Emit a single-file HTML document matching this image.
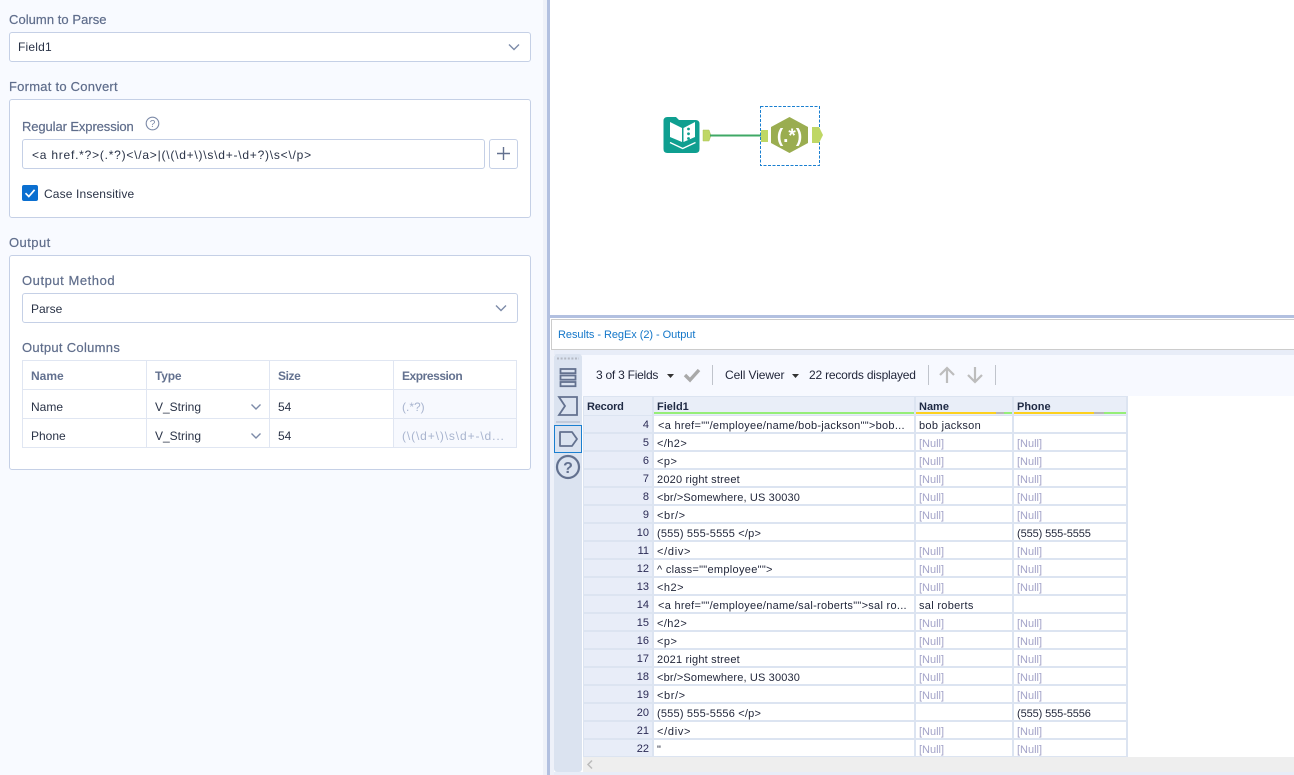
<!DOCTYPE html>
<html><head><meta charset="utf-8">
<style>
html,body{margin:0;padding:0}
body{width:1294px;height:775px;position:relative;overflow:hidden;background:#fff;font-family:"Liberation Sans",sans-serif;font-size:12px;color:#28334a}
.a{position:absolute;white-space:nowrap}
.lb{color:#5f6d8b;font-size:13px;line-height:16px;-webkit-text-stroke:.2px #5f6d8b}
.box{position:absolute;background:#fff;border:1px solid #c5d0e6;border-radius:3px;box-sizing:border-box}
.tx{position:absolute;white-space:nowrap;font-size:12px;line-height:16px;color:#2a3347}
.th{position:absolute;font-weight:bold;color:#63718f;font-size:12px;line-height:16px}
.ln{position:absolute;background:#e0e6f2}
.row{position:absolute;left:584px;width:543px;height:16px;line-height:20px;font-size:11px;color:#1f2438}
.row span{position:absolute;top:0;height:16px;background:#fff;white-space:nowrap;overflow:hidden;box-sizing:border-box;padding-left:3px}
.row .r{left:0;width:68px;background:#e8edf8;text-align:right;padding:0 3px 0 0;color:#2b2b55;line-height:18px}
.row .f{left:70px;width:260px}
.row .n{left:332px;width:96px}
.row .p{left:430px;width:112px}
.nl{color:#a3a3c8}
.hd{position:absolute;top:397px;height:18px;background:#e9eef8;font-weight:bold;font-size:11px;line-height:20px;color:#1f2a44;padding-left:3px;box-sizing:border-box}
.bar{position:absolute;top:412px;height:2px}
</style></head><body>

<div class="a" style="left:0;top:0;width:543px;height:775px;background:#f8faff"></div>
<div class="a" style="left:543px;top:0;width:4px;height:775px;background:#eef1f9"></div>
<div class="a" style="left:547px;top:0;width:3px;height:775px;background:#b2c0e0"></div>
<div class="a" style="left:550px;top:315px;width:744px;height:3px;background:#b2c0e0"></div>

<div class="a lb" style="left:9px;top:12px;letter-spacing:.05px">Column to Parse</div>
<div class="box" style="left:9px;top:32px;width:522px;height:30px"></div>
<div class="tx" style="left:18px;top:39px;letter-spacing:.2px">Field1</div>
<svg class="a" style="left:508px;top:43px" width="12" height="8"><path d="M1 1.500 6 6.500 11 1.500" fill="none" stroke="#7c8aa8" stroke-width="1.400"/></svg>

<div class="a lb" style="left:9px;top:79px;letter-spacing:.24px">Format to Convert</div>
<div class="box" style="left:9px;top:99px;width:522px;height:119px"></div>
<div class="a lb" style="left:22px;top:119px;letter-spacing:-.1px">Regular Expression</div>
<svg class="a" style="left:145px;top:116px" width="15" height="15"><circle cx="7.500" cy="7.500" r="6.300" fill="none" stroke="#7c8aa8" stroke-width="1.100"/><text x="7.500" y="11" text-anchor="middle" font-size="10" font-family="Liberation Sans" fill="#7c8aa8">?</text></svg>
<div class="box" style="left:22px;top:139px;width:463px;height:30px"></div>
<div class="tx" style="left:32px;top:147px;letter-spacing:.77px">&lt;a href.*?&gt;(.*?)&lt;\/a&gt;|(\(\d+\)\s\d+-\d+?)\s&lt;\/p&gt;</div>
<div class="box" style="left:489px;top:139px;width:29px;height:30px"></div>
<svg class="a" style="left:496px;top:146px" width="15" height="15"><path d="M7.500 1v13M1 7.500h13" stroke="#63718f" stroke-width="1.400" fill="none"/></svg>
<div class="a" style="left:22px;top:185px;width:16px;height:16px;background:#0b6fd0;border-radius:2px"></div>
<svg class="a" style="left:22px;top:185px" width="16" height="16"><path d="M3.500 8.200 6.800 11.500 12.600 4.800" fill="none" stroke="#fff" stroke-width="1.700"/></svg>
<div class="tx" style="left:44px;top:186px;letter-spacing:.14px">Case Insensitive</div>

<div class="a lb" style="left:9px;top:235px;letter-spacing:.45px">Output</div>
<div class="box" style="left:9px;top:255px;width:522px;height:215px"></div>
<div class="a lb" style="left:22px;top:273px;letter-spacing:.55px">Output Method</div>
<div class="box" style="left:22px;top:293px;width:496px;height:30px"></div>
<div class="tx" style="left:31px;top:301px">Parse</div>
<svg class="a" style="left:495px;top:304px" width="12" height="8"><path d="M1 1.500 6 6.500 11 1.500" fill="none" stroke="#7c8aa8" stroke-width="1.400"/></svg>
<div class="a lb" style="left:22px;top:340px;letter-spacing:.3px">Output Columns</div>

<div class="a" style="left:394px;top:390px;width:123px;height:58px;background:#f7f9fe"></div>
<div class="ln" style="left:22px;top:360px;width:495px;height:1px"></div>
<div class="ln" style="left:22px;top:389px;width:495px;height:1px"></div>
<div class="ln" style="left:22px;top:418px;width:495px;height:1px"></div>
<div class="ln" style="left:22px;top:447px;width:495px;height:1px"></div>
<div class="ln" style="left:22px;top:360px;width:1px;height:88px"></div>
<div class="ln" style="left:146px;top:360px;width:1px;height:88px"></div>
<div class="ln" style="left:269px;top:360px;width:1px;height:88px"></div>
<div class="ln" style="left:393px;top:360px;width:1px;height:88px"></div>
<div class="ln" style="left:516px;top:360px;width:1px;height:88px"></div>
<div class="th" style="left:31px;top:368px">Name</div>
<div class="th" style="left:155px;top:368px;letter-spacing:-.2px">Type</div>
<div class="th" style="left:278px;top:368px;letter-spacing:-.4px">Size</div>
<div class="th" style="left:402px;top:368px;letter-spacing:-.45px">Expression</div>
<div class="tx" style="left:31px;top:399px">Name</div>
<div class="tx" style="left:155px;top:399px">V_String</div>
<svg class="a" style="left:250px;top:403px" width="12" height="8"><path d="M1.500 1.500 6 6 10.500 1.500" fill="none" stroke="#7c8aa8" stroke-width="1.400"/></svg>
<div class="tx" style="left:278px;top:399px">54</div>
<div class="tx" style="left:402px;top:399px;color:#a9b5cf">(.*?)</div>
<div class="tx" style="left:31px;top:428px">Phone</div>
<div class="tx" style="left:155px;top:428px">V_String</div>
<svg class="a" style="left:250px;top:432px" width="12" height="8"><path d="M1.500 1.500 6 6 10.500 1.500" fill="none" stroke="#7c8aa8" stroke-width="1.400"/></svg>
<div class="tx" style="left:278px;top:428px">54</div>
<div class="tx" style="left:402px;top:428px;color:#a9b5cf;letter-spacing:.88px">(\(\d+\)\s\d+-\d...</div>

<!-- canvas -->
<svg class="a" style="left:650px;top:95px" width="190" height="80">
<path d="M13.500 26 Q13.500 22 17.500 22 H26 L29 25 H45.500 Q49.500 25 49.500 29 V54 Q49.500 58 45.500 58 H17.500 Q13.500 58 13.500 54Z" fill="#0f9f90"/>
<path d="M20 27 L32 33 V47 L20 42Z" fill="#fff"/><path d="M45 27 L33.500 33 V47 L45 42Z" fill="#fff"/>
<circle cx="38.500" cy="34" r="1.400" fill="#0f9f90"/><circle cx="38.500" cy="38.800" r="1.400" fill="#0f9f90"/><circle cx="38.500" cy="43.500" r="1.400" fill="#0f9f90"/>
<path d="M20 47.500 L32.700 53.500 L45.500 47.500" fill="none" stroke="#fff" stroke-width="1.300"/>
<path d="M53 35 H59 L61 40.500 L59 46 H53Z" fill="#bfd765" stroke="#a9c056" stroke-width=".5"/>
<path d="M60 40.500 H113" stroke="#3fa866" stroke-width="2"/>
<rect x="110.500" y="11.500" width="59" height="59" fill="none" stroke="#1a7fd0" stroke-width="1" stroke-dasharray="3 1.500"/>
<rect x="111" y="35" width="7" height="12" fill="#bfd765"/>
<path d="M139.500 22 L158 32 V48 L139.500 58 L121 48 V32Z" fill="#9aad50"/>
<text x="139.500" y="47" text-anchor="middle" font-family="Liberation Sans" font-weight="bold" font-size="19" fill="#fff">(.*)</text>
<path d="M162 32 H169 L173 40 L169 48 H162Z" fill="#bfd765"/>
</svg>

<!-- results -->
<div class="a" style="left:551px;top:319px;width:743px;height:31px;background:#fff;border:1px solid #ccc;border-right:0;box-sizing:border-box;line-height:31px;font-size:11px;color:#1477c9;padding-left:6px;letter-spacing:-.05px">Results - RegEx (2) - Output</div>
<div class="a" style="left:550px;top:350px;width:744px;height:425px;background:#fff"></div>
<div class="a" style="left:550px;top:350px;width:744px;height:5px;background:#e8edf8"></div>
<div class="a" style="left:550px;top:772px;width:744px;height:3px;background:#e8edf8"></div>
<div class="a" style="left:550px;top:350px;width:4px;height:425px;background:#eef1f9"></div>
<div class="a" style="left:554px;top:354px;width:28px;height:418px;background:#dbe3f0;border-radius:3px"></div>
<div class="a" style="left:582px;top:355px;width:712px;height:41px;background:#f7f9ff"></div>
<div class="a" style="left:583px;top:757px;width:711px;height:15px;background:#eeeeee"></div>
<svg class="a" style="left:585px;top:758px" width="10" height="13"><path d="M7 2.500 3 6.500 7 10.500" fill="none" stroke="#bbb" stroke-width="1.500"/></svg>

<svg class="a" style="left:554px;top:354px" width="28" height="130">
<path d="M3 4.500h22" stroke="#b4b9c4" stroke-width="2" stroke-dasharray="2 1.600"/>
<g fill="none" stroke="#63718f" stroke-width="1.800"><rect x="6.500" y="15" width="15" height="4.200"/><rect x="6.500" y="21.500" width="15" height="4.200"/><rect x="6.500" y="28" width="15" height="4.200"/>
<path d="M5 43 H23 V61 H5 L11 52Z"/></g>
<path d="M2 68h24" stroke="#aab3c6" stroke-width="1"/>
<rect x=".5" y="71.500" width="27" height="27" fill="none" stroke="#1a7fd0"/>
<path d="M6 78 H18 L23 85 L18 92 H6Z" fill="none" stroke="#63718f" stroke-width="1.800" stroke-linejoin="round"/>
<circle cx="14" cy="113" r="11" fill="none" stroke="#63718f" stroke-width="2.200"/>
<text x="14" y="119" text-anchor="middle" font-family="Liberation Sans" font-weight="bold" font-size="16" fill="#63718f">?</text>
</svg>

<div class="a" style="left:596px;top:368px;font-size:12px;color:#1f2438;letter-spacing:-.25px">3 of 3 Fields</div>
<svg class="a" style="left:667px;top:374px" width="7" height="4"><path d="M0 0H7L3.500 4Z" fill="#333"/></svg>
<svg class="a" style="left:683px;top:367px" width="18" height="16"><path d="M2 8 7 13 16 3" fill="none" stroke="#a9a9a9" stroke-width="3.400"/></svg>
<div class="a" style="left:712px;top:365px;width:1px;height:20px;background:#c0c4cc"></div>
<div class="a" style="left:725px;top:368px;font-size:12px;color:#1f2438;letter-spacing:-.1px">Cell Viewer</div>
<svg class="a" style="left:792px;top:374px" width="7" height="4"><path d="M0 0H7L3.500 4Z" fill="#333"/></svg>
<div class="a" style="left:809px;top:368px;font-size:12px;color:#1f2438;letter-spacing:-.2px">22 records displayed</div>
<div class="a" style="left:928px;top:365px;width:1px;height:20px;background:#c0c4cc"></div>
<svg class="a" style="left:938px;top:366px" width="18" height="18"><path d="M9 17V2M2 9 9 2 16 9" fill="none" stroke="#bdbdbd" stroke-width="2.200"/></svg>
<svg class="a" style="left:966px;top:366px" width="18" height="18"><path d="M9 1V16M2 9 9 16 16 9" fill="none" stroke="#bdbdbd" stroke-width="2.200"/></svg>
<div class="a" style="left:995px;top:365px;width:1px;height:20px;background:#c0c4cc"></div>

<!-- grid -->
<div class="a" style="left:583px;top:396px;width:545px;height:361px;background:#dce4f1"></div>
<div class="hd" style="left:584px;width:68px;letter-spacing:-.2px">Record</div>
<div class="hd" style="left:654px;width:260px">Field1</div>
<div class="hd" style="left:916px;width:96px">Name</div>
<div class="hd" style="left:1014px;width:112px">Phone</div>
<div class="bar" style="left:654px;width:260px;background:#96ee78"></div>
<div class="bar" style="left:916px;width:80px;background:#fdd11f"></div>
<div class="bar" style="left:996px;width:8px;background:#b8b8b8"></div>
<div class="bar" style="left:1004px;width:8px;background:#96ee78"></div>
<div class="bar" style="left:1014px;width:80px;background:#fdd11f"></div>
<div class="bar" style="left:1094px;width:10px;background:#b8b8b8"></div>
<div class="bar" style="left:1104px;width:22px;background:#96ee78"></div>

<div class="row" style="top:416px"><span class="r">4</span><span class="f" style="letter-spacing:.28px;padding-left:4px">&lt;a href=""/employee/name/bob-jackson""&gt;bob...</span><span class="n" style="letter-spacing:.3px">bob jackson</span><span class="p"></span></div>
<div class="row" style="top:434px"><span class="r">5</span><span class="f" style="letter-spacing:.4px">&lt;/h2&gt;</span><span class="n nl">[Null]</span><span class="p nl">[Null]</span></div>
<div class="row" style="top:452px"><span class="r">6</span><span class="f" style="letter-spacing:.5px">&lt;p&gt;</span><span class="n nl">[Null]</span><span class="p nl">[Null]</span></div>
<div class="row" style="top:470px"><span class="r">7</span><span class="f" style="letter-spacing:.2px">2020 right street</span><span class="n nl">[Null]</span><span class="p nl">[Null]</span></div>
<div class="row" style="top:488px"><span class="r">8</span><span class="f" style="letter-spacing:.15px">&lt;br/&gt;Somewhere, US 30030</span><span class="n nl">[Null]</span><span class="p nl">[Null]</span></div>
<div class="row" style="top:506px"><span class="r">9</span><span class="f" style="letter-spacing:.6px">&lt;br/&gt;</span><span class="n nl">[Null]</span><span class="p nl">[Null]</span></div>
<div class="row" style="top:524px"><span class="r">10</span><span class="f" style="letter-spacing:.2px">(555) 555-5555 &lt;/p&gt;</span><span class="n"></span><span class="p" style="letter-spacing:-.1px">(555) 555-5555</span></div>
<div class="row" style="top:542px"><span class="r">11</span><span class="f" style="letter-spacing:.7px">&lt;/div&gt;</span><span class="n nl">[Null]</span><span class="p nl">[Null]</span></div>
<div class="row" style="top:560px"><span class="r">12</span><span class="f" style="letter-spacing:.3px">^ class=""employee""&gt;</span><span class="n nl">[Null]</span><span class="p nl">[Null]</span></div>
<div class="row" style="top:578px"><span class="r">13</span><span class="f" style="letter-spacing:.5px">&lt;h2&gt;</span><span class="n nl">[Null]</span><span class="p nl">[Null]</span></div>
<div class="row" style="top:596px"><span class="r">14</span><span class="f" style="letter-spacing:.28px;padding-left:4px">&lt;a href=""/employee/name/sal-roberts""&gt;sal ro...</span><span class="n" style="letter-spacing:.3px">sal roberts</span><span class="p"></span></div>
<div class="row" style="top:614px"><span class="r">15</span><span class="f" style="letter-spacing:.4px">&lt;/h2&gt;</span><span class="n nl">[Null]</span><span class="p nl">[Null]</span></div>
<div class="row" style="top:632px"><span class="r">16</span><span class="f" style="letter-spacing:.5px">&lt;p&gt;</span><span class="n nl">[Null]</span><span class="p nl">[Null]</span></div>
<div class="row" style="top:650px"><span class="r">17</span><span class="f" style="letter-spacing:.2px">2021 right street</span><span class="n nl">[Null]</span><span class="p nl">[Null]</span></div>
<div class="row" style="top:668px"><span class="r">18</span><span class="f" style="letter-spacing:.15px">&lt;br/&gt;Somewhere, US 30030</span><span class="n nl">[Null]</span><span class="p nl">[Null]</span></div>
<div class="row" style="top:686px"><span class="r">19</span><span class="f" style="letter-spacing:.6px">&lt;br/&gt;</span><span class="n nl">[Null]</span><span class="p nl">[Null]</span></div>
<div class="row" style="top:704px"><span class="r">20</span><span class="f" style="letter-spacing:.2px">(555) 555-5556 &lt;/p&gt;</span><span class="n"></span><span class="p" style="letter-spacing:-.1px">(555) 555-5556</span></div>
<div class="row" style="top:722px"><span class="r">21</span><span class="f" style="letter-spacing:.7px">&lt;/div&gt;</span><span class="n nl">[Null]</span><span class="p nl">[Null]</span></div>
<div class="row" style="top:740px"><span class="r">22</span><span class="f">"</span><span class="n nl">[Null]</span><span class="p nl">[Null]</span></div>
</body></html>
